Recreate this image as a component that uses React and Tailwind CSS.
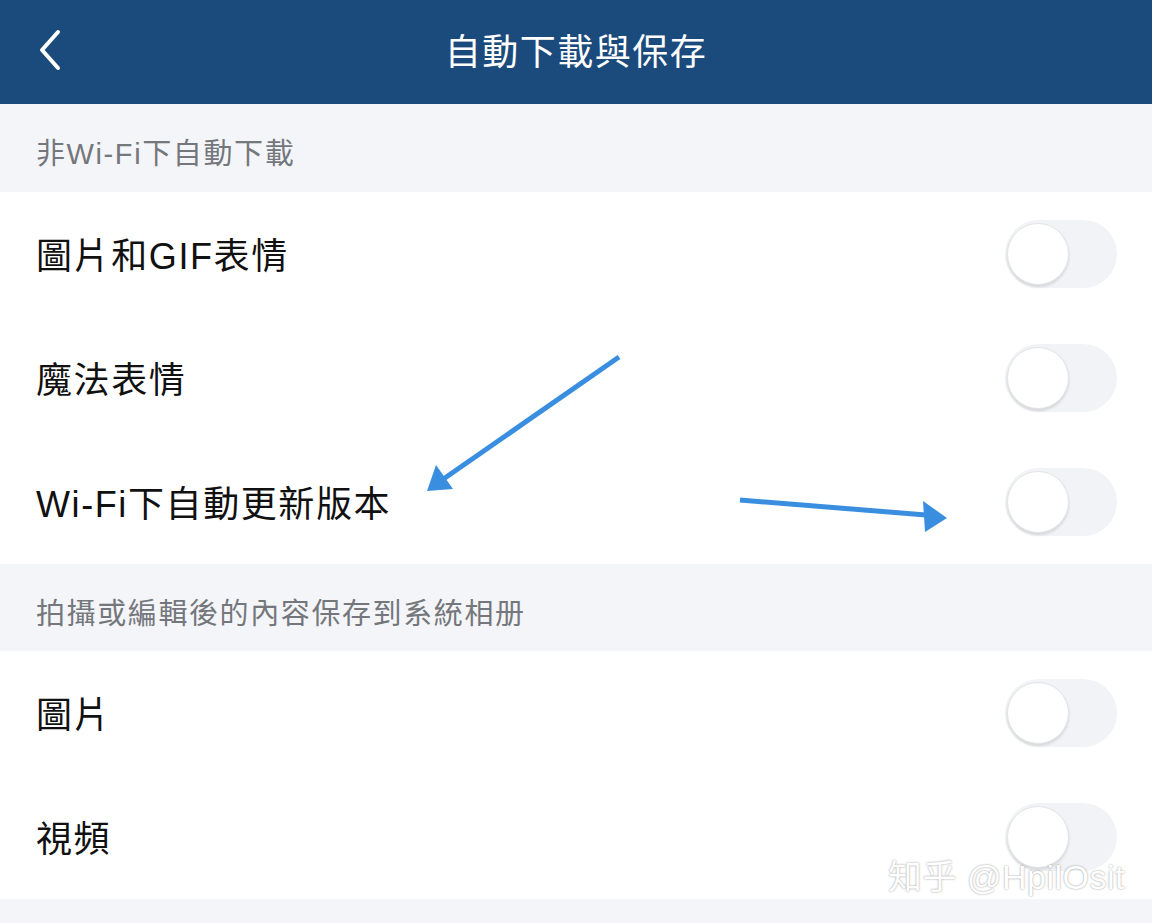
import React from 'react'

const font = { fontFamily: '"Liberation Sans", "Noto Sans CJK TC", sans-serif' }

const Toggle = () => (
  <div className="w-[112px] h-[68px] rounded-full bg-[#f1f3f7] flex items-center pl-[2px]">
    <div className="w-[62px] h-[62px] rounded-full bg-white border border-[#e3e4e8] shadow-[0_2px_3px_rgba(0,0,0,0.12)]" />
  </div>
)

const Row = ({ label }) => (
  <div className="h-[124px] flex items-center justify-between pl-[36px] pr-[35px] bg-white">
    <span className="text-[36px] tracking-[1.6px] text-[#111] pt-[6px]">{label}</span>
    <Toggle />
  </div>
)

const Section = ({ title, h }) => (
  <div className={`${h} flex items-center pl-[36px] bg-[#f4f5f8]`}>
    <span className="text-[29px] tracking-[1.6px] text-[#74777c] pt-[14px]">{title}</span>
  </div>
)

export default function App() {
  return (
    <div className="relative w-[1152px] h-[923px] bg-[#f4f5f8] overflow-hidden" style={font}>
      <div className="h-[104px] bg-[#1b4a7c] flex items-center justify-center relative">
        <svg className="absolute left-[34px] top-[28px]" width="32" height="44" viewBox="0 0 32 44">
          <path d="M24 4 L8 22 L24 40" fill="none" stroke="white" strokeWidth="4" strokeLinecap="round" strokeLinejoin="round" />
        </svg>
        <span className="text-[36px] text-white tracking-[1.5px] pt-[2px]">自動下載與保存</span>
      </div>

      <Section title="非Wi-Fi下自動下載" h="h-[88px]" />
      <Row label="圖片和GIF表情" />
      <Row label="魔法表情" />
      <Row label="Wi-Fi下自動更新版本" />

      <Section title="拍攝或編輯後的內容保存到系統相册" h="h-[87px]" />
      <Row label="圖片" />
      <Row label="視頻" />

      <svg className="absolute left-0 top-0 pointer-events-none" width="1152" height="923">
        <line x1="619" y1="357" x2="442" y2="480" stroke="#3a8ee0" strokeWidth="5" />
        <polygon points="427,491 436,465 453,489" fill="#3a8ee0" />
        <line x1="740" y1="500" x2="926" y2="515" stroke="#3a8ee0" strokeWidth="5" />
        <polygon points="923,501 947,518 925,532" fill="#3a8ee0" />
      </svg>

      <div className="absolute left-[888px] top-[852px] text-[34px] tracking-[0.5px] text-white [text-shadow:0_0_2px_rgba(0,0,0,0.45)]">
        知乎 @HpilOsit
      </div>
    </div>
  )
}
